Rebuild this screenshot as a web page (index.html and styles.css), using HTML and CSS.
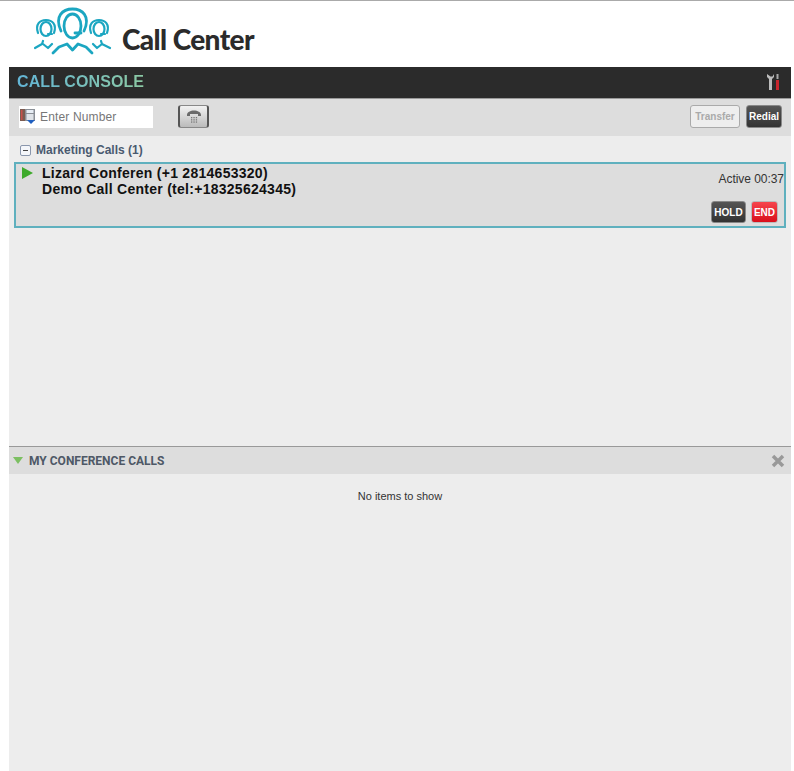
FILE: index.html
```html
<!DOCTYPE html>
<html lang="en">
<head>
<meta charset="utf-8">
<title>Call Center</title>
<link rel="stylesheet" href="styles.css">
</head>
<body>
<header class="brand">
  <svg class="logo" width="78" height="48" viewBox="0 0 78 48" fill="none" stroke="#1ba6c1" stroke-linecap="round" stroke-linejoin="round">
    <g stroke-width="2.200">
      <ellipse cx="12" cy="22" rx="5.500" ry="7"/>
      <path d="M4 26c-3-9 2-13 8-13s11 4 8 13"/>
      <path d="M14 27h4"/>
      <path d="M1 41l7-4 1-3M9 37l5 4 4-4"/>
      <ellipse cx="65" cy="22" rx="5.500" ry="7"/>
      <path d="M57 26c-3-9 2-13 8-13s11 4 8 13"/>
      <path d="M67 27h4"/>
      <path d="M59 37l4 4 5-4 8 4M68 37l-1-3"/>
    </g>
    <g stroke-width="2.800">
      <ellipse cx="38.500" cy="19" rx="8.500" ry="12"/>
      <path d="M27 24C20 9 29 2 38.500 2S57 9 50 24"/>
      <path d="M41 26h6"/>
      <path d="M19 46l6-6 8-3 5.500 6 5.500-6 8 3 6 6"/>
    </g>
  </svg>
  <span class="brand-name">Call Center</span>
</header>

<main class="console">
  <div class="title-bar">
    <h1 class="title">CALL CONSOLE</h1>
    <svg class="tools" width="14" height="18" viewBox="0 0 14 18">
      <path d="M1 1v3l2 2v11h3V6l2-2V1L6.500 3.500h-2z" fill="#bdbdbd"/>
      <rect x="10.500" y="1" width="2" height="5" fill="#a8a8a8"/>
      <rect x="10" y="7" width="3" height="10" fill="#c9252c"/>
    </svg>
  </div>

  <div class="toolbar">
    <div class="number-field">
      <svg class="field-icon" width="16" height="17" viewBox="0 0 16 17">
        <rect x="0" y="1" width="5" height="12" fill="#7d5b50"/>
        <rect x="1" y="2" width="1.500" height="10" fill="#c8504a"/>
        <rect x="5" y="1" width="10" height="12" fill="#8a8f96"/>
        <rect x="6.500" y="2" width="7" height="3" fill="#e8eef5"/>
        <rect x="6.500" y="6" width="7" height="6" fill="#dfe3e8"/>
        <path d="M7 12h8l-4 4z" fill="#1f5fc0"/>
      </svg>
      <span class="placeholder">Enter Number</span>
    </div>
    <button class="dial" type="button" aria-label="Dial">
      <svg width="18" height="18" viewBox="0 0 18 18">
        <path d="M2 7c0-6 14-6 14 0v1h-3V6H5v2H2z" fill="#6a6a6a"/>
        <g fill="#777"><rect x="6" y="9" width="1.300" height="1.300"/><rect x="8.400" y="9" width="1.300" height="1.300"/><rect x="10.800" y="9" width="1.300" height="1.300"/><rect x="6" y="11.200" width="1.300" height="1.300"/><rect x="8.400" y="11.200" width="1.300" height="1.300"/><rect x="10.800" y="11.200" width="1.300" height="1.300"/><rect x="6" y="13.400" width="1.300" height="1.300"/><rect x="8.400" y="13.400" width="1.300" height="1.300"/><rect x="10.800" y="13.400" width="1.300" height="1.300"/></g>
      </svg>
    </button>
    <div class="toolbar-actions">
      <button class="btn btn-disabled" type="button">Transfer</button>
      <button class="btn btn-dark" type="button">Redial</button>
    </div>
  </div>

  <section class="calls">
    <div class="group-head">
      <span class="collapse"></span>
      <span class="group-name">Marketing Calls (1)</span>
    </div>
    <div class="call">
      <span class="play"></span>
      <div class="parties">
        <div>Lizard Conferen (+1 2814653320)</div>
        <div>Demo Call Center (tel:+18325624345)</div>
      </div>
      <div class="call-side">
        <div class="status">Active 00:37</div>
        <div class="call-actions">
          <button class="btn btn-dark btn-hold" type="button">HOLD</button>
          <button class="btn btn-end" type="button">END</button>
        </div>
      </div>
    </div>
  </section>

  <section class="conf">
    <div class="conf-head">
      <span class="arrow"></span>
      <h2 class="conf-title">MY CONFERENCE CALLS</h2>
      <svg class="close" width="14" height="14" viewBox="0 0 14 14"><path d="M2 2l10 10M12 2L2 12" stroke="#999" stroke-width="3.500"/></svg>
    </div>
    <p class="empty">No items to show</p>
  </section>
</main>
</body>
</html>
```
FILE: styles.css
```css
* { box-sizing: border-box; }
html, body { height: 100%; }
body {
  margin: 0;
  display: flex;
  flex-direction: column;
  height: 771px;
  overflow: hidden;
  background: #fff;
  border-top: 1px solid #aaa;
  font-family: "Liberation Sans", Arial, sans-serif;
}
.brand {
  height: 66px;
  flex: none;
  display: flex;
  align-items: flex-start;
  padding: 6px 0 0 34px;
}
.logo { display: block; flex: none; }
.brand-name {
  margin: 14px 0 0 10px;
  font-family: Lato, "Liberation Sans", sans-serif;
  font-size: 28px;
  font-weight: 900;
  letter-spacing: -.6px;
  line-height: 36px;
  color: #2b2b2b;
}
.console {
  flex: 1;
  margin: 0 3px 0 9px;
  display: flex;
  flex-direction: column;
  background: #ededed;
  min-height: 0;
}
.title-bar {
  height: 32px;
  flex: none;
  display: flex;
  align-items: center;
  justify-content: space-between;
  padding: 0 11px 2px 8px;
  background: #2b2b2b;
  border-bottom: 1px solid #999;
}
.title {
  margin: 0;
  font-size: 16px;
  font-weight: 700;
  letter-spacing: .1px;
  background: linear-gradient(90deg, #63b5d6, #8cc9a4);
  -webkit-background-clip: text;
  background-clip: text;
  color: transparent;
}
.tools { display: block; }
.toolbar {
  height: 37px;
  flex: none;
  display: flex;
  align-items: center;
  padding: 0 9px 2px 10px;
  background: #ddd;
}
.number-field {
  width: 134px;
  height: 22px;
  display: flex;
  align-items: center;
  gap: 4px;
  padding-left: 1px;
  background: #fff;
}
.field-icon { display: block; flex: none; }
.placeholder { font-size: 12px; letter-spacing: .15px; color: #777; }
.dial {
  margin-left: 25px;
  width: 31px;
  height: 23px;
  padding: 0;
  display: flex;
  align-items: center;
  justify-content: center;
  border: 2px solid #555;
  border-top: 1px solid #888;
  border-bottom: 1px solid #888;
  border-radius: 3px;
  background: linear-gradient(#f2f2f2, #bbb);
}
.toolbar-actions { margin-left: auto; display: flex; gap: 6px; }
.btn {
  height: 23px;
  padding: 0;
  border-radius: 3px;
  font-family: "Liberation Sans", Arial, sans-serif;
  font-size: 10px;
  font-weight: 700;
}
.btn-disabled {
  width: 50px;
  border: 1px solid #aaa;
  background: #eee;
  color: #aaa;
}
.btn-dark {
  width: 36px;
  border: 1px solid #888;
  background: linear-gradient(#555, #333);
  color: #fff;
}
.calls { flex: 1; min-height: 0; padding: 0 5px; }
.group-head {
  height: 26px;
  display: flex;
  align-items: center;
  gap: 5px;
  padding: 2px 0 0 6px;
}
.collapse {
  position: relative;
  width: 11px;
  height: 11px;
  border: 1px solid #8a97ad;
  border-radius: 2px;
  background: #f4f6fa;
}
.collapse::after {
  content: "";
  position: absolute;
  left: 2px;
  top: 4px;
  width: 5px;
  height: 1px;
  background: #444;
}
.group-name { font-size: 12px; font-weight: 700; color: #4a5a70; }
.call {
  height: 66px;
  display: flex;
  border: 2px solid #5fb0be;
  background: #ddd;
}
.play {
  flex: none;
  margin: 3px 0 0 6px;
  width: 0;
  height: 0;
  border-style: solid;
  border-width: 6.500px 0 6.500px 11px;
  border-color: transparent transparent transparent #3eaa2c;
}
.parties {
  flex: 1;
  margin: 1px 0 0 9px;
  font-size: 14px;
  font-weight: 700;
  line-height: 16px;
  letter-spacing: .27px;
  color: #111;
}
.call-side {
  display: flex;
  flex-direction: column;
  align-items: flex-end;
  justify-content: space-between;
  padding: 8px 0 3px;
}
.status { font-size: 12px; line-height: 14px; letter-spacing: -.05px; color: #333; }
.call-actions { display: flex; gap: 5px; margin-right: 6px; }
.btn-hold { width: 35px; height: 22px; }
.btn-end {
  width: 27px;
  height: 22px;
  border: 1px solid #bbb;
  background: linear-gradient(#f6454d, #d90f1b);
  color: #fff;
}
.conf {
  height: 325px;
  flex: none;
  border-top: 1px solid #999;
}
.conf-head {
  height: 27px;
  display: flex;
  align-items: center;
  gap: 6px;
  padding: 0 6px 0 4px;
  background: #ddd;
}
.arrow {
  width: 0;
  height: 0;
  border-style: solid;
  border-width: 7px 5px 0;
  border-color: #7cbf62 transparent transparent;
}
.conf-title {
  flex: 1;
  margin: 0;
  font-family: Roboto, "Liberation Sans", sans-serif;
  font-size: 12px;
  font-weight: 700;
  color: #4e5866;
}
.close { display: block; }
.empty {
  margin: 16px 0 0;
  text-align: center;
  font-size: 11px;
  line-height: 13px;
  color: #333;
}
```
